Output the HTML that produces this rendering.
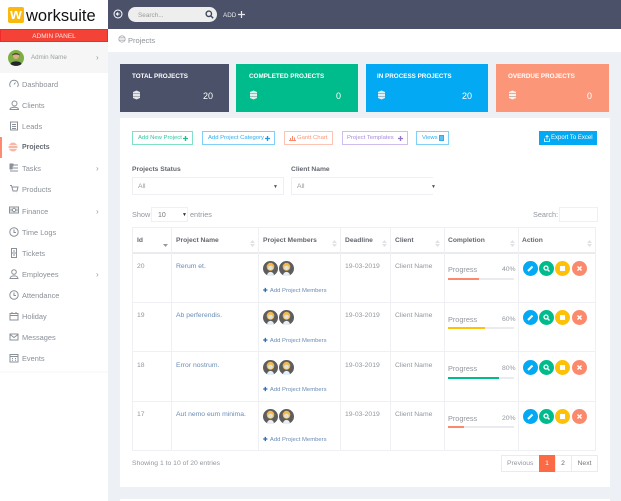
<!DOCTYPE html>
<html lang="en"><head><meta charset="utf-8"><title>Projects</title>
<style>
html,body{margin:0;padding:0;width:621px;height:501px;overflow:hidden;background:#edf1f5;font-family:"Liberation Sans",sans-serif}
div,span,svg{position:absolute;box-sizing:border-box}
.t{white-space:nowrap;line-height:12px;height:12px;font-size:6.8px;color:#92979e;margin-top:.5px}
.m{left:22px;font-size:7.4px;color:#8a9097}
.i{left:9px;width:10px;height:10px;fill:none;stroke:#8a9097;stroke-width:1}
.c{left:96px;font-size:8px;color:#999}
.card{top:64px;height:48px}
.ct{font-size:6.3px;font-weight:bold;color:#fff;top:7px;left:12px;line-height:12px;white-space:nowrap}
.cn{font-size:9px;color:#fff;top:26px;line-height:12px}
.ci{left:12px;top:26px;width:9px;height:10px;opacity:.85}
.b{top:131px;height:14px;background:#fff;border:1px solid;font-size:5.9px;line-height:13px;white-space:nowrap}
.b svg{top:2.500px}
.l{background:#eef0f3}
.th{font-size:6.7px;font-weight:bold;color:#63676e}
.a{font-size:6.8px;color:#6a8cb5}
.am{font-size:5.900px;color:#6a8cb5}
.am b{color:#2a6db0;font-size:5.500px;margin-right:1px}
.s{width:15px;height:15px;border-radius:50%}
.s svg{left:4px;top:4px;width:7px;height:7px}
.ar{width:5px;height:9px;fill:#e0e2e5}
</style></head><body>

<!-- header -->
<div style="left:108px;top:0;width:513px;height:29px;background:#4a5168"></div>
<div style="left:0;top:0;width:108px;height:29px;background:#fff"></div>
<div style="left:8px;top:7px;width:16px;height:16px;background:#fbb80f;border-radius:2px"></div>
<span class="t" style="left:8px;top:8.500px;width:16px;text-align:center;color:#fff;font-weight:bold;font-size:15px">w</span>
<span class="t" style="left:26px;top:8.500px;height:14px;line-height:14px;font-size:16.500px;color:#111">worksuite</span>
<svg style="left:113px;top:9px;width:10px;height:10px" viewBox="0 0 10 10" fill="none" stroke="#fff"><circle cx="5" cy="5" r="4"/><path d="M6.500 5H3.500M5 3.500L3.500 5L5 6.500" /></svg>
<div style="left:128px;top:7px;width:89px;height:15px;background:#eeeeee;border-radius:8px"></div>
<span class="t" style="left:138px;top:9px;font-size:6.400px;color:#9a9a9a">Search...</span>
<svg style="left:205px;top:10px;width:9px;height:9px" viewBox="0 0 9 9" fill="none" stroke="#3f4a5c" stroke-width="1.400"><circle cx="3.800" cy="3.800" r="2.700"/><path d="M6 6L8.200 8.200"/></svg>
<span class="t" style="left:223px;top:9px;font-size:6.300px;color:#e8e9ee">ADD</span>
<svg style="left:238px;top:10.500px;width:7px;height:7px" viewBox="0 0 7 7" stroke="#e8e9ee" stroke-width="1.200"><path d="M3.500 0V7M0 3.500H7"/></svg>

<!-- breadcrumb -->
<div style="left:108px;top:29px;width:513px;height:23px;background:#fff"></div>
<svg style="left:118px;top:35px;width:8px;height:8px" viewBox="0 0 10 10" fill="none" stroke="#a9adb3"><ellipse cx="5" cy="5" rx="4" ry="4"/><path d="M1 3.500H9M1 6.500H9"/></svg>
<span class="t" style="left:128px;top:34px;font-size:7.500px;color:#8d9298">Projects</span>

<!-- sidebar -->
<div style="left:0;top:29px;width:108px;height:472px;background:#fff"></div>
<div style="left:0;top:29px;width:108px;height:13px;background:#f44336;border:1px solid #ee2a2a"></div>
<span class="t" style="left:0;top:30px;width:108px;text-align:center;font-size:6.500px;color:#fbe3e1">ADMIN PANEL</span>
<div style="left:0;top:42px;width:108px;height:31px;background:#f5f6f5"></div>
<svg style="left:8px;top:50px;width:16px;height:16px" viewBox="0 0 16 16"><circle cx="8" cy="8" r="8" fill="#7fae45"/><circle cx="8" cy="6" r="3" fill="#dcae88"/><path d="M4 5.500C4.500 2.500 11.500 2.500 12 5.500C10 4 6 4 4 5.500Z" fill="#2e2a22"/><path d="M2.500 14C3 10.500 13 10.500 13.500 14C11 16.500 5 16.500 2.500 14Z" fill="#23262c"/></svg>
<span class="t" style="left:31px;top:51px;font-size:6.200px;color:#9a9ea3">Admin Name</span>
<span class="t c" style="top:51px">›</span>

<svg class="i" style="top:79px" viewBox="0 0 10 10"><path d="M1.500 8A4.300 4.300 0 1 1 8.500 8M5 5.500L6.500 3.500"/></svg><span class="t m" style="top:78px">Dashboard</span>
<svg class="i" style="top:100px" viewBox="0 0 10 10"><circle cx="5.500" cy="3.500" r="2.500"/><path d="M1 9.500C1 6.500 9.500 6.500 9.500 9.500Z"/></svg><span class="t m" style="top:99px">Clients</span>
<svg class="i" style="top:121px" viewBox="0 0 10 10"><path d="M1.500 1H8.500V9H1.500ZM3 3.500H7M3 5.500H7M3 7.500H7"/></svg><span class="t m" style="top:120px">Leads</span>
<div style="left:0;top:137px;width:2px;height:21px;background:#ff8a70"></div>
<svg style="left:8px;top:142px;width:10px;height:10px" viewBox="0 0 10 10" fill="#f8b6a6"><ellipse cx="5" cy="5" rx="4.500" ry="4.500"/><path d="M0.500 3.500H9.500M0.500 6.500H9.500" stroke="#fff" stroke-width=".7"/></svg>
<span class="t" style="left:22px;top:141px;font-weight:bold;font-size:7px;color:#666b72">Projects</span>
<svg class="i" style="top:163px" viewBox="0 0 10 10"><path d="M1 2H9M1 5H9M1 8H9M1 1V3H4V1ZM1 4V6H3V4Z"/></svg><span class="t m" style="top:162px">Tasks</span><span class="t c" style="top:162px">›</span>
<svg class="i" style="top:184px" viewBox="0 0 10 10"><path d="M1 1.500H2.500L4 7H8L9 3H3M4.500 9H4.600M7.500 9H7.600"/></svg><span class="t m" style="top:183px">Products</span>
<svg class="i" style="top:205px" viewBox="0 0 10 10"><path d="M0.500 2H9.500V8H0.500Z"/><circle cx="5" cy="5" r="1.700"/><path d="M2 3.500V6.500M8 3.500V6.500"/></svg><span class="t m" style="top:205px">Finance</span><span class="t c" style="top:205px">›</span>
<svg class="i" style="top:227px" viewBox="0 0 10 10"><circle cx="5" cy="5" r="4.200"/><path d="M5 2.500V5.500H7"/></svg><span class="t m" style="top:226px">Time Logs</span>
<svg class="i" style="top:248px" viewBox="0 0 10 10"><path d="M2.500 0.500H7.500V9.500H2.500ZM2.500 5H7.500M4 3H6M4 7H6"/></svg><span class="t m" style="top:247px">Tickets</span>
<svg class="i" style="top:269px" viewBox="0 0 10 10"><circle cx="5" cy="3" r="2.300"/><path d="M1 9.500C1 6 9 6 9 9.500Z"/></svg><span class="t m" style="top:268px">Employees</span><span class="t c" style="top:268px">›</span>
<svg class="i" style="top:290px" viewBox="0 0 10 10"><circle cx="5" cy="5" r="4.200"/><path d="M5 2.500V5.500H7"/></svg><span class="t m" style="top:289px">Attendance</span>
<svg class="i" style="top:311px" viewBox="0 0 10 10"><path d="M1 2.500H9V9H1ZM1 4.500H9M3 1V3M7 1V3"/></svg><span class="t m" style="top:310px">Holiday</span>
<svg class="i" style="top:332px" viewBox="0 0 10 10"><path d="M1 2H9V8H1ZM1 2.500L5 5.500L9 2.500"/></svg><span class="t m" style="top:331px">Messages</span>
<svg class="i" style="top:353px" viewBox="0 0 10 10"><path d="M1 1.500H9V9H1ZM1 3.500H9M3 5.500H4M6 5.500H7M3 7.300H4M6 7.300H7"/></svg><span class="t m" style="top:352px">Events</span>
<div style="left:0;top:371px;width:108px;height:2px;background:#fafafb"></div>

<!-- cards -->
<svg width="0" height="0" style="left:0;top:0"><defs><g id="db"><path d="M1 2L4.500 0.500L8 2V8L4.500 9.500L1 8Z" fill="#fff"/><path d="M1 3.500H8M1 6.500H8" stroke="#000" stroke-opacity=".35" stroke-width=".8"/></g></defs></svg>
<div class="card" style="left:120px;width:109px;background:#4a5168"><span class="ct">TOTAL PROJECTS</span><svg class="ci" viewBox="0 0 9 10"><use href="#db"/></svg><span class="cn" style="left:83px">20</span></div>
<div class="card" style="left:236px;width:122px;background:#00bb8c"><span class="ct" style="left:13px">COMPLETED PROJECTS</span><svg class="ci" style="left:13px" viewBox="0 0 9 10"><use href="#db"/></svg><span class="cn" style="left:100px">0</span></div>
<div class="card" style="left:366px;width:122px;background:#03a9f3"><span class="ct" style="left:11px">IN PROCESS PROJECTS</span><svg class="ci" style="left:11px" viewBox="0 0 9 10"><use href="#db"/></svg><span class="cn" style="left:96px">20</span></div>
<div class="card" style="left:496px;width:113px;background:#fb9678"><span class="ct">OVERDUE PROJECTS</span><svg class="ci" viewBox="0 0 9 10"><use href="#db"/></svg><span class="cn" style="left:91px">0</span></div>

<!-- panel -->
<div style="left:120px;top:118px;width:490px;height:369px;background:#fff"></div>
<div style="left:120px;top:499px;width:490px;height:2px;background:#fff"></div>

<div class="b" style="left:132px;width:61px;border-color:#7fe0c4;color:#2fc79f;padding-left:5px">Add New Project<svg style="left:50px;width:5px;height:5px;top:3.500px" viewBox="0 0 6 6" stroke="#1fbf94" stroke-width="1.600"><path d="M3 0V6M0 3H6"/></svg></div>
<div class="b" style="left:202px;width:73px;border-color:#81d0f8;color:#2aaef0;padding-left:5px">Add Project Category<svg style="left:62px;width:5px;height:5px;top:3.500px" viewBox="0 0 6 6" stroke="#1a9fe6" stroke-width="1.600"><path d="M3 0V6M0 3H6"/></svg></div>
<div class="b" style="left:284px;width:49px;border-color:#fdc4b3;color:#fb9678;padding-left:12px">Gantt Chart<svg style="left:4px;width:7px;height:6px;top:3px" viewBox="0 0 7 6" stroke="#fb8a6c"><path d="M0 5.500H7M1.500 5V3M3.500 5V1M5.500 5V2.500"/></svg></div>
<div class="b" style="left:342px;width:66px;border-color:#cfbdf0;color:#a98ce0;padding-left:4px">Project Templates<svg style="left:55px;width:5px;height:5px;top:3.500px" viewBox="0 0 6 6" stroke="#9675ce" stroke-width="1.600"><path d="M3 0V6M0 3H6"/></svg></div>
<div class="b" style="left:416px;width:33px;border-color:#81d0f8;color:#2aaef0;padding-left:5px">Views<svg style="left:22px;width:5px;height:6px;top:3px" viewBox="0 0 5 6"><path d="M0 0H5V6H0Z" fill="#2aaef0"/><path d="M1 2H4M1 4H4" stroke="#fff" stroke-width=".6"/></svg></div>
<div class="b" style="left:539px;width:58px;border:0;background:#03a9f3;color:#fff;line-height:14px;padding-left:12px;font-size:6px">Export To Excel<svg style="left:5px;width:6px;height:7px;top:3.500px" viewBox="0 0 6 7" fill="none" stroke="#fff" stroke-width=".8"><path d="M3 4.500V0.500M1.500 2L3 0.500L4.500 2M0.500 3.500V6.500H5.500V3.500"/></svg></div>

<span class="t th" style="left:132px;top:163px">Projects Status</span>
<span class="t th" style="left:291px;top:163px">Client Name</span>
<div style="left:132px;top:177px;width:152px;height:18px;border:1px solid #eef0f3"></div>
<span class="t" style="left:138px;top:180px;color:#999">All</span>
<span class="t" style="left:273px;top:180px;font-size:5px;color:#555">▼</span>
<div style="left:291px;top:177px;width:142px;height:18px;border:1px solid #eef0f3;border-right:0"></div>
<span class="t" style="left:297px;top:180px;color:#999">All</span>
<span class="t" style="left:431px;top:180px;font-size:5px;color:#555">▼</span>

<span class="t" style="left:132px;top:208px;font-size:7.300px">Show</span>
<div style="left:151px;top:207px;width:37px;height:15px;border:1px solid #eef0f3"></div>
<span class="t" style="left:158px;top:209px;font-size:7px;color:#777">10</span>
<span class="t" style="left:182px;top:208px;font-size:5px;color:#333">▼</span>
<span class="t" style="left:190px;top:208px;font-size:7.300px">entries</span>
<span class="t" style="left:533px;top:208px;font-size:7.300px">Search:</span>
<div style="left:559px;top:207px;width:39px;height:15px;border:1px solid #eef0f3"></div>

<!-- table lines -->
<div class="l" style="left:132px;top:227px;width:464px;height:1px"></div>
<div class="l" style="left:132px;top:252px;width:464px;height:2px;background:#e9ebee"></div>
<div class="l" style="left:132px;top:302px;width:464px;height:1px"></div>
<div class="l" style="left:132px;top:351px;width:464px;height:1px"></div>
<div class="l" style="left:132px;top:401px;width:464px;height:1px"></div>
<div class="l" style="left:132px;top:450px;width:464px;height:1px"></div>
<div class="l" style="left:132px;top:227px;width:1px;height:224px"></div>
<div class="l" style="left:171px;top:227px;width:1px;height:224px"></div>
<div class="l" style="left:258px;top:227px;width:1px;height:224px"></div>
<div class="l" style="left:340px;top:227px;width:1px;height:224px"></div>
<div class="l" style="left:390px;top:227px;width:1px;height:224px"></div>
<div class="l" style="left:444px;top:227px;width:1px;height:224px"></div>
<div class="l" style="left:518px;top:227px;width:1px;height:224px"></div>
<div class="l" style="left:595px;top:227px;width:1px;height:224px"></div>

<span class="t th" style="left:137px;top:234px">Id</span>
<span class="t th" style="left:176px;top:234px">Project Name</span>
<span class="t th" style="left:263px;top:234px">Project Members</span>
<span class="t th" style="left:345px;top:234px">Deadline</span>
<span class="t th" style="left:395px;top:234px">Client</span>
<span class="t th" style="left:448px;top:234px">Completion</span>
<span class="t th" style="left:522px;top:234px">Action</span>
<svg class="ar" style="left:163px;top:239px" viewBox="0 0 5 9"><path d="M0 5H5L2.500 8Z" fill="#999"/></svg>
<svg class="ar" style="left:250px;top:239px" viewBox="0 0 5 9"><path d="M0 4L2.500 1L5 4ZM0 5H5L2.500 8Z"/></svg>
<svg class="ar" style="left:332px;top:239px" viewBox="0 0 5 9"><path d="M0 4L2.500 1L5 4ZM0 5H5L2.500 8Z"/></svg>
<svg class="ar" style="left:382px;top:239px" viewBox="0 0 5 9"><path d="M0 4L2.500 1L5 4ZM0 5H5L2.500 8Z"/></svg>
<svg class="ar" style="left:435px;top:239px" viewBox="0 0 5 9"><path d="M0 4L2.500 1L5 4ZM0 5H5L2.500 8Z"/></svg>
<svg class="ar" style="left:510px;top:239px" viewBox="0 0 5 9"><path d="M0 4L2.500 1L5 4ZM0 5H5L2.500 8Z"/></svg>
<svg class="ar" style="left:587px;top:239px" viewBox="0 0 5 9"><path d="M0 4L2.500 1L5 4ZM0 5H5L2.500 8Z"/></svg>

<!-- row 20 -->
<span class="t" style="left:137px;top:260px">20</span><span class="t a" style="left:176px;top:260px">Rerum et.</span>
<svg style="left:263px;top:261px;width:31px;height:15px" viewBox="0 0 31 15"><g id="av"><circle cx="7.500" cy="7.500" r="7.500" fill="#5d5d5d"/><ellipse cx="7.500" cy="5.800" rx="3.800" ry="4" fill="#f2b84e"/><ellipse cx="7.500" cy="6.800" rx="2.400" ry="2.200" fill="#dfe3d6"/><path d="M4 15C4 9.500 11 9.500 11 15Z" fill="#e8eef5"/></g><use href="#av" x="16"/></svg>
<span class="t am" style="left:263px;top:284px"><b>✚</b> Add Project Members</span>
<span class="t" style="left:345px;top:260px">19-03-2019</span><span class="t" style="left:395px;top:260px">Client Name</span>
<span class="t" style="left:448px;top:263px;font-size:7.300px">Progress</span><span class="t" style="left:502px;top:263px">40%</span>
<div style="left:448px;top:278px;width:66px;height:2px;background:#e9ebee"></div><div style="left:448px;top:278px;width:31px;height:2px;background:#fb8a6c"></div>
<div class="s" style="left:523px;top:261px;background:#03a9f3"><svg viewBox="0 0 7 7"><path d="M1 6L5.500 1.500" stroke="#fff" stroke-width="2"/></svg></div>
<div class="s" style="left:539px;top:261px;background:#00bb8c"><svg viewBox="0 0 7 7" fill="none" stroke="#fff" stroke-width="1.300"><circle cx="3" cy="3" r="2"/><path d="M4.500 4.500L6.500 6.500"/></svg></div>
<div class="s" style="left:555px;top:261px;background:#fec107"><svg viewBox="0 0 7 7"><path d="M1 1H6V6H1Z" fill="#fff"/></svg></div>
<div class="s" style="left:572px;top:261px;background:#fb8a6c"><svg viewBox="0 0 7 7"><path d="M1.500 1.500L5.500 5.500M5.500 1.500L1.500 5.500" stroke="#fff" stroke-width="1.500"/></svg></div>

<!-- row 19 -->
<span class="t" style="left:137px;top:309px">19</span><span class="t a" style="left:176px;top:309px">Ab perferendis.</span>
<svg style="left:263px;top:310px;width:31px;height:15px" viewBox="0 0 31 15"><use href="#av"/><use href="#av" x="16"/></svg>
<span class="t am" style="left:263px;top:334px"><b>✚</b> Add Project Members</span>
<span class="t" style="left:345px;top:309px">19-03-2019</span><span class="t" style="left:395px;top:309px">Client Name</span>
<span class="t" style="left:448px;top:313px;font-size:7.300px">Progress</span><span class="t" style="left:502px;top:313px">60%</span>
<div style="left:448px;top:327px;width:66px;height:2px;background:#e9ebee"></div><div style="left:448px;top:327px;width:37px;height:2px;background:#fec107"></div>
<div class="s" style="left:523px;top:310px;background:#03a9f3"><svg viewBox="0 0 7 7"><path d="M1 6L5.500 1.500" stroke="#fff" stroke-width="2"/></svg></div>
<div class="s" style="left:539px;top:310px;background:#00bb8c"><svg viewBox="0 0 7 7" fill="none" stroke="#fff" stroke-width="1.300"><circle cx="3" cy="3" r="2"/><path d="M4.500 4.500L6.500 6.500"/></svg></div>
<div class="s" style="left:555px;top:310px;background:#fec107"><svg viewBox="0 0 7 7"><path d="M1 1H6V6H1Z" fill="#fff"/></svg></div>
<div class="s" style="left:572px;top:310px;background:#fb8a6c"><svg viewBox="0 0 7 7"><path d="M1.500 1.500L5.500 5.500M5.500 1.500L1.500 5.500" stroke="#fff" stroke-width="1.500"/></svg></div>

<!-- row 18 -->
<span class="t" style="left:137px;top:359px">18</span><span class="t a" style="left:176px;top:359px">Error nostrum.</span>
<svg style="left:263px;top:360px;width:31px;height:15px" viewBox="0 0 31 15"><use href="#av"/><use href="#av" x="16"/></svg>
<span class="t am" style="left:263px;top:383px"><b>✚</b> Add Project Members</span>
<span class="t" style="left:345px;top:359px">19-03-2019</span><span class="t" style="left:395px;top:359px">Client Name</span>
<span class="t" style="left:448px;top:362px;font-size:7.300px">Progress</span><span class="t" style="left:502px;top:362px">80%</span>
<div style="left:448px;top:377px;width:66px;height:2px;background:#e9ebee"></div><div style="left:448px;top:377px;width:51px;height:2px;background:#00bb8c"></div>
<div class="s" style="left:523px;top:360px;background:#03a9f3"><svg viewBox="0 0 7 7"><path d="M1 6L5.500 1.500" stroke="#fff" stroke-width="2"/></svg></div>
<div class="s" style="left:539px;top:360px;background:#00bb8c"><svg viewBox="0 0 7 7" fill="none" stroke="#fff" stroke-width="1.300"><circle cx="3" cy="3" r="2"/><path d="M4.500 4.500L6.500 6.500"/></svg></div>
<div class="s" style="left:555px;top:360px;background:#fec107"><svg viewBox="0 0 7 7"><path d="M1 1H6V6H1Z" fill="#fff"/></svg></div>
<div class="s" style="left:572px;top:360px;background:#fb8a6c"><svg viewBox="0 0 7 7"><path d="M1.500 1.500L5.500 5.500M5.500 1.500L1.500 5.500" stroke="#fff" stroke-width="1.500"/></svg></div>

<!-- row 17 -->
<span class="t" style="left:137px;top:408px">17</span><span class="t a" style="left:176px;top:408px">Aut nemo eum minima.</span>
<svg style="left:263px;top:409px;width:31px;height:15px" viewBox="0 0 31 15"><use href="#av"/><use href="#av" x="16"/></svg>
<span class="t am" style="left:263px;top:433px"><b>✚</b> Add Project Members</span>
<span class="t" style="left:345px;top:408px">19-03-2019</span><span class="t" style="left:395px;top:408px">Client Name</span>
<span class="t" style="left:448px;top:412px;font-size:7.300px">Progress</span><span class="t" style="left:502px;top:412px">20%</span>
<div style="left:448px;top:426px;width:66px;height:2px;background:#e9ebee"></div><div style="left:448px;top:426px;width:16px;height:2px;background:#fb8a6c"></div>
<div class="s" style="left:523px;top:409px;background:#03a9f3"><svg viewBox="0 0 7 7"><path d="M1 6L5.500 1.500" stroke="#fff" stroke-width="2"/></svg></div>
<div class="s" style="left:539px;top:409px;background:#00bb8c"><svg viewBox="0 0 7 7" fill="none" stroke="#fff" stroke-width="1.300"><circle cx="3" cy="3" r="2"/><path d="M4.500 4.500L6.500 6.500"/></svg></div>
<div class="s" style="left:555px;top:409px;background:#fec107"><svg viewBox="0 0 7 7"><path d="M1 1H6V6H1Z" fill="#fff"/></svg></div>
<div class="s" style="left:572px;top:409px;background:#fb8a6c"><svg viewBox="0 0 7 7"><path d="M1.500 1.500L5.500 5.500M5.500 1.500L1.500 5.500" stroke="#fff" stroke-width="1.500"/></svg></div>

<!-- footer -->
<span class="t" style="left:132px;top:457px">Showing 1 to 10 of 20 entries</span>
<div style="left:501px;top:455px;width:97px;height:17px;border:1px solid #e9ebee"></div>
<div style="left:555px;top:455px;width:1px;height:17px;background:#e9ebee"></div>
<div style="left:571px;top:455px;width:1px;height:17px;background:#e9ebee"></div>
<div style="left:539px;top:455px;width:16px;height:17px;background:#fb6a45"></div>
<span class="t" style="left:507px;top:457px">Previous</span>
<span class="t" style="left:539px;top:457px;width:16px;text-align:center;color:#fff">1</span>
<span class="t" style="left:555px;top:457px;width:16px;text-align:center;color:#666">2</span>
<span class="t" style="left:572px;top:457px;width:25px;text-align:center;color:#777">Next</span>
</body></html>
